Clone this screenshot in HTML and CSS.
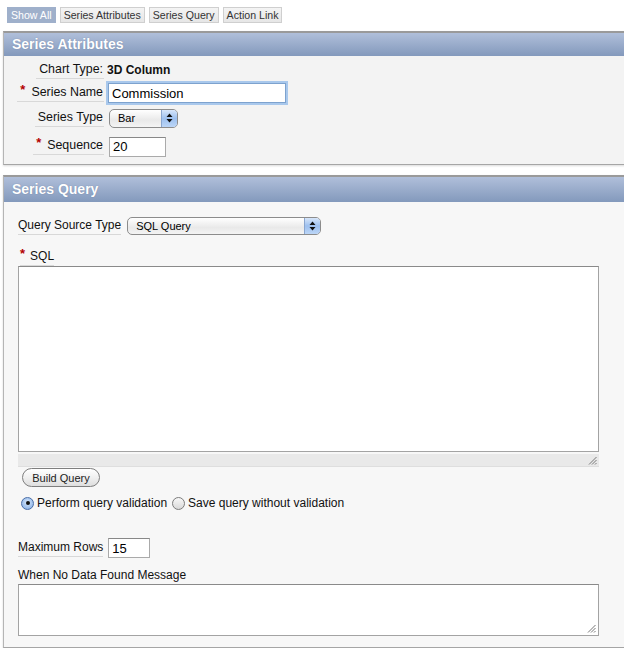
FILE: index.html
```html
<!DOCTYPE html>
<html>
<head>
<meta charset="utf-8">
<link rel="stylesheet" href="styles.css">
</head>
<body>
<div class="tabs">
  <span class="tab active">Show All</span>
  <span class="tab">Series Attributes</span>
  <span class="tab">Series Query</span>
  <span class="tab">Action Link</span>
</div>

<section class="panel panel-attrs">
  <h2 class="panel-head">Series Attributes</h2>
  <div class="panel-body attrs">
    <div class="row r1">
      <span class="cell"><span class="lbl">Chart Type:</span></span>
      <span class="val">3D Column</span>
    </div>
    <div class="row r2">
      <span class="cell"><span class="lbl"><span class="req">*</span>Series Name</span></span>
      <span class="input focus name">Commission</span>
    </div>
    <div class="row r3">
      <span class="cell"><span class="lbl">Series Type</span></span>
      <span class="select sel-bar"><span class="sel-text">Bar</span><span class="arrows"><svg width="7" height="10" viewBox="0 0 7 10"><path d="M3.5 0.5 L6.5 4 L0.5 4 Z M0.5 6 L6.5 6 L3.5 9.5 Z" fill="#111"/></svg></span></span>
    </div>
    <div class="row r4">
      <span class="cell"><span class="lbl"><span class="req">*</span>Sequence</span></span>
      <span class="input seq">20</span>
    </div>
  </div>
</section>

<section class="panel panel-query">
  <h2 class="panel-head">Series Query</h2>
  <div class="panel-body query">
    <div class="qrow">
      <span class="lbl2">Query Source Type</span>
      <span class="select sel-sql"><span class="sel-text">SQL Query</span><span class="arrows"><svg width="7" height="10" viewBox="0 0 7 10"><path d="M3.5 0.5 L6.5 4 L0.5 4 Z M0.5 6 L6.5 6 L3.5 9.5 Z" fill="#111"/></svg></span></span>
    </div>
    <div class="sql-label"><span class="lbl2"><span class="req">*</span>SQL</span></div>
    <div class="textarea big"></div>
    <div class="resize-bar"><svg class="grip" width="9" height="9" viewBox="0 0 9 9"><path d="M8.5 1 L1 8.5 M8.5 4 L4 8.5 M8.5 7 L7 8.5" stroke="#777" stroke-width="1" fill="none"/></svg></div>
    <div class="btn-row"><span class="btn">Build Query</span></div>
    <div class="radios">
      <span class="radio on"></span><span class="rtext">Perform query validation</span>
      <span class="radio"></span><span class="rtext">Save query without validation</span>
    </div>
    <div class="maxrow">
      <span class="lbl2">Maximum Rows</span>
      <span class="input max">15</span>
    </div>
    <div class="nodata-label"><span class="lbl2">When No Data Found Message</span></div>
    <div class="textarea small"><svg class="grip2" width="9" height="9" viewBox="0 0 9 9"><path d="M8.5 1 L1 8.5 M8.5 4 L4 8.5 M8.5 7 L7 8.5" stroke="#777" stroke-width="1" fill="none"/></svg></div>
  </div>
</section>
</body>
</html>
```
FILE: styles.css
```css
html, body {
  margin: 0;
  padding: 0;
  background: #fff;
  font-family: "Liberation Sans", Arial, sans-serif;
  font-size: 12px;
  color: #111;
  overflow: hidden;
}

.tabs {
  display: flex;
  gap: 4px;
  padding: 7px 0 0 7px;
  height: 16px;
}
.tab {
  display: inline-flex;
  align-items: center;
  box-sizing: border-box;
  height: 16px;
  padding: 0 3px;
  font-size: 10.6px;
  color: #333;
  background: linear-gradient(#f4f4f4, #e6e6e6);
  border: 1px solid #cfcfcf;
}
.tab.active {
  background: #9fb0cb;
  border-color: #9fb0cb;
  color: #fff;
}

.panel {
  margin-left: 3px;
  margin-right: -20px;
  border-top: 2px solid #9a9a9a;
  border-left: 1px solid #b5b5b5;
  border-bottom: 1px solid #a5a5a5;
  box-shadow: 0 1px 2px rgba(0,0,0,0.15);
}
.panel-attrs { margin-top: 8px; }
.panel-query { margin-top: 10px; }

.panel-head {
  margin: 0;
  height: 23px;
  line-height: 23px;
  padding-left: 8px;
  font-size: 14px;
  font-weight: bold;
  color: #fff;
  text-shadow: 0 0 1px rgba(60,80,120,0.5);
  background: linear-gradient(#b0bfda, #8399bc);
}
.panel-query .panel-head { height: 25px; line-height: 25px; }

.panel-body.attrs {
  background: #f3f3f3;
  padding: 5px 0 7px 0;
}
.row {
  display: flex;
  align-items: center;
}
.cell {
  width: 100px;
  flex: none;
  display: flex;
  justify-content: flex-end;
}
.lbl {
  display: inline-block;
  border-bottom: 1px solid #d8d8d8;
  padding: 0 1px 2px 3px;
  line-height: 14px;
  font-size: 12.4px;
}
.r1 { height: 18px; }
.r2 { margin-top: 3px; height: 22px; }
.r3 { margin-top: 4px; height: 20px; }
.r4 { margin-top: 8px; height: 21px; }

.req {
  color: #b30000;
  font-weight: bold;
  font-size: 13px;
  margin-right: 6px;
  position: relative;
  top: -2px;
}

.val {
  font-weight: bold;
  margin-left: 3px;
  font-size: 12px;
}

.input {
  display: inline-flex;
  align-items: center;
  box-sizing: border-box;
  height: 20px;
  padding: 0 3px;
  background: #fff;
  border: 1px solid #aaa;
  border-top-color: #888;
  font-size: 13px;
  color: #000;
}
.input.name {
  margin-left: 4px;
  width: 178px;
  border: 1px solid #7da2ce;
  box-shadow: 0 0 0 2px #a9c8ec;
}
.input.seq {
  margin-left: 5px;
  width: 57px;
}

.select {
  display: inline-flex;
  align-items: stretch;
  box-sizing: border-box;
  height: 19px;
  border: 1px solid #8c8c8c;
  border-radius: 5px;
  background: linear-gradient(#ffffff, #e9e9e9 60%, #f4f4f4);
  overflow: hidden;
  font-size: 11px;
  color: #000;
}
.sel-text {
  flex: 1;
  display: flex;
  align-items: center;
  padding-left: 8px;
}
.arrows {
  width: 15px;
  display: flex;
  align-items: center;
  justify-content: center;
  border-left: 1px solid #8aa6cf;
  background: linear-gradient(#d7e6fa, #9dc0ef 50%, #bcd6f7);
}
.sel-bar { margin-left: 5px; width: 69px; }
.sel-sql { margin-left: 6px; width: 194px; height: 18px; }

.panel-body.query {
  background: #f7f7f7;
  padding: 15px 0 11px 14px;
}
.lbl2 {
  display: inline-block;
  border-bottom: 1px solid #d8d8d8;
  padding-bottom: 2px;
  line-height: 14px;
}
.qrow {
  display: flex;
  align-items: center;
  height: 18px;
}
.sql-label {
  margin-top: 14px;
  padding-left: 2px;
}
.sql-label .req { margin-right: 5px; }
.textarea {
  box-sizing: border-box;
  background: #fff;
  border: 1px solid #a3a3a3;
  border-top-color: #8a8a8a;
  width: 581px;
  margin-left: 0;
  position: relative;
}
.textarea.big {
  margin-top: 0;
  height: 186px;
}
.resize-bar {
  margin-top: 2px;
  width: 581px;
  height: 12px;
  background: #e9e9e9;
  border-bottom: 1px solid #dedede;
  position: relative;
}
.grip { position: absolute; right: 2px; top: 2px; }
.grip2 { position: absolute; right: 2px; bottom: 2px; }

.btn-row { margin-top: 1px; padding-left: 4px; }
.btn {
  display: inline-flex;
  align-items: center;
  justify-content: center;
  box-sizing: border-box;
  width: 78px;
  height: 19px;
  border: 1px solid #7e7e7e;
  border-radius: 10px;
  background: linear-gradient(#ffffff, #f0f0f0 50%, #dedede);
  font-size: 11px;
  color: #222;
}

.radios {
  display: flex;
  align-items: center;
  margin-top: 8px;
  height: 16px;
  padding-left: 3px;
}
.radio {
  box-sizing: border-box;
  width: 13px;
  height: 13px;
  border-radius: 50%;
  border: 1px solid #7b7b7b;
  background: linear-gradient(#f8f8f8, #d9d9d9);
  display: inline-flex;
  align-items: center;
  justify-content: center;
}
.radio.on {
  border-color: #4a6ea8;
  background: radial-gradient(circle at 50% 40%, #d8e8fb, #7ea9e4);
}
.radio.on::after {
  content: "";
  width: 4px;
  height: 4px;
  border-radius: 50%;
  background: #111;
}
.rtext { margin-left: 3px; margin-right: 5px; }

.maxrow {
  display: flex;
  align-items: center;
  margin-top: 27px;
  height: 20px;
}
.input.max {
  margin-left: 5px;
  width: 42px;
}
.nodata-label { margin-top: 10px; }
.textarea.small {
  margin-top: -1px;
  height: 52px;
}
```
